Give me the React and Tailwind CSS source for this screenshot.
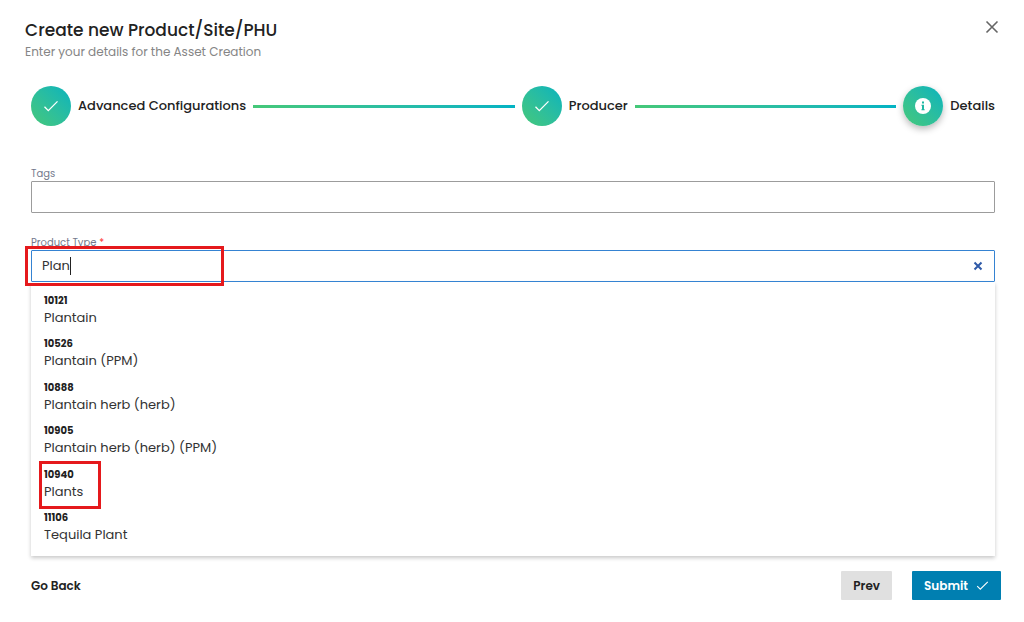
import { useState } from 'react';

const products = [
  { code: '10121', name: 'Plantain' },
  { code: '10526', name: 'Plantain (PPM)' },
  { code: '10888', name: 'Plantain herb (herb)' },
  { code: '10905', name: 'Plantain herb (herb) (PPM)' },
  { code: '10940', name: 'Plants', marked: true },
  { code: '11106', name: 'Tequila Plant' },
];

function CheckIcon({ className }) {
  return (
    <svg viewBox="0 0 16 16" fill="none" stroke="currentColor" strokeWidth="1.3" className={className} aria-hidden="true">
      <path d="M1.5 8.8 5.3 12.6 14.5 3.4" />
    </svg>
  );
}

function InfoIcon() {
  return (
    <svg viewBox="0 0 16 16" className="size-4" aria-hidden="true">
      <circle cx="8" cy="8" r="8" fill="#fff" />
      <path d="M7 3.6h2v1.8H7zM6.4 6.8H9v4.4h.7v1H6.4v-1H7V7.8h-.6z" fill="#1fb8a4" />
    </svg>
  );
}

function Step({ label, active }) {
  return (
    <li className="flex shrink-0 items-center gap-[7px]">
      <span className={`flex size-10 items-center justify-center rounded-full bg-linear-to-tr from-[#45c878] to-[#02b3bd] text-white ${active ? 'shadow-[0_3px_7px_rgba(0,0,0,0.28)]' : ''}`}>
        {active ? <InfoIcon /> : <CheckIcon className="size-4" />}
      </span>
      <span className="text-[13px] font-medium">{label}</span>
    </li>
  );
}

function Connector() {
  return <li aria-hidden="true" className="h-[3px] flex-1 bg-linear-to-r from-[#45c878] to-[#02b3c4]" />;
}

export default function App() {
  const [query, setQuery] = useState('Plan');

  return (
    <main className="bg-white font-[Poppins,Inter,sans-serif] text-[#222]">
      <header className="flex items-start justify-between pt-[18px] pr-[25px] pl-[25px]">
        <div>
          <h1 className="text-[17px] leading-6 font-medium">Create new Product/Site/PHU</h1>
          <p className="text-xs leading-5 text-[#858585]">Enter your details for the Asset Creation</p>
        </div>
        <button type="button" aria-label="Close" className="mt-[2px] text-[#666]">
          <svg viewBox="0 0 14 14" className="size-[14px]" fill="none" stroke="currentColor" strokeWidth="1.6">
            <path d="M1.5 1.5l11 11M12.5 1.5l-11 11" />
          </svg>
        </button>
      </header>

      <form className="pr-[29px] pl-[31px]" onSubmit={(e) => e.preventDefault()}>
        <ol className="mt-6 flex items-center gap-[7px]">
          <Step label="Advanced Configurations" />
          <Connector />
          <Step label="Producer" />
          <Connector />
          <Step label="Details" active />
        </ol>

        <div className="mt-[41px]">
          <label htmlFor="tags" className="block text-[10px] leading-[14px] text-[#73788c]">Tags</label>
          <input id="tags" type="text" className="block h-8 w-full rounded-[1px] border border-[#9c9c9c] px-[11px] text-[13px] outline-none" />
        </div>

        <div className="mt-[23px]">
          <label htmlFor="product-type" className="block text-[10px] leading-[14px] text-[#73788c]">
            Product Type <span className="text-[#f33]">*</span>
          </label>
          <div className="relative flex h-8 items-center rounded-[1px] border border-[#3583d2] pr-[11px] pl-[10px]">
            <input
              id="product-type"
              type="text"
              role="combobox"
              aria-expanded="true"
              aria-controls="product-options"
              value={query}
              onChange={(e) => setQuery(e.target.value)}
              className="field-sizing-content text-[13px] text-[#333] caret-transparent outline-none"
            />
            <span className="h-[18px] w-px bg-[#222]" />
            <button type="button" aria-label="Clear" onClick={() => setQuery('')} className="ml-auto text-[#2f5aa8]">
              <svg viewBox="0 0 10 10" className="size-[10px]" fill="none" stroke="currentColor" strokeWidth="2">
                <path d="M1.5 1.5l7 7M8.5 1.5l-7 7" />
              </svg>
            </button>
            <span className="pointer-events-none absolute -top-[5px] -left-[7px] h-10 w-[199px] border-3 border-[#e5191c]" />
          </div>

          <div className="pt-[6px] pb-[7px] shadow-[0_2px_4px_rgba(0,0,0,0.22)]">
            <ul id="product-options" role="listbox" aria-label="Product Type" className="grid h-[261px] grid-rows-6">
              {products.map((p) => (
                <li key={p.code} role="option" aria-selected="false" className="relative flex flex-col justify-center pl-[13px]">
                  <span className="text-[10px] leading-4 font-bold">{p.code}</span>
                  <span className="text-[13px] leading-[18px] text-[#333]">{p.name}</span>
                  {p.marked && <span className="pointer-events-none absolute -top-px left-2 h-12 w-[62px] border-3 border-[#e5191c]" />}
                </li>
              ))}
            </ul>
          </div>
        </div>

        <footer className="-mr-[6px] mt-[15px] flex items-center pb-[22px] text-xs font-semibold">
          <button type="button">Go Back</button>
          <button type="button" className="ml-auto h-[29px] rounded-[1px] bg-[#e0e0e0] px-3">Prev</button>
          <button type="submit" className="ml-5 flex h-[29px] items-center gap-2 rounded-[1px] bg-[#007fb1] px-3 text-white">
            Submit
            <CheckIcon className="size-[13px]" />
          </button>
        </footer>
      </form>
    </main>
  );
}
